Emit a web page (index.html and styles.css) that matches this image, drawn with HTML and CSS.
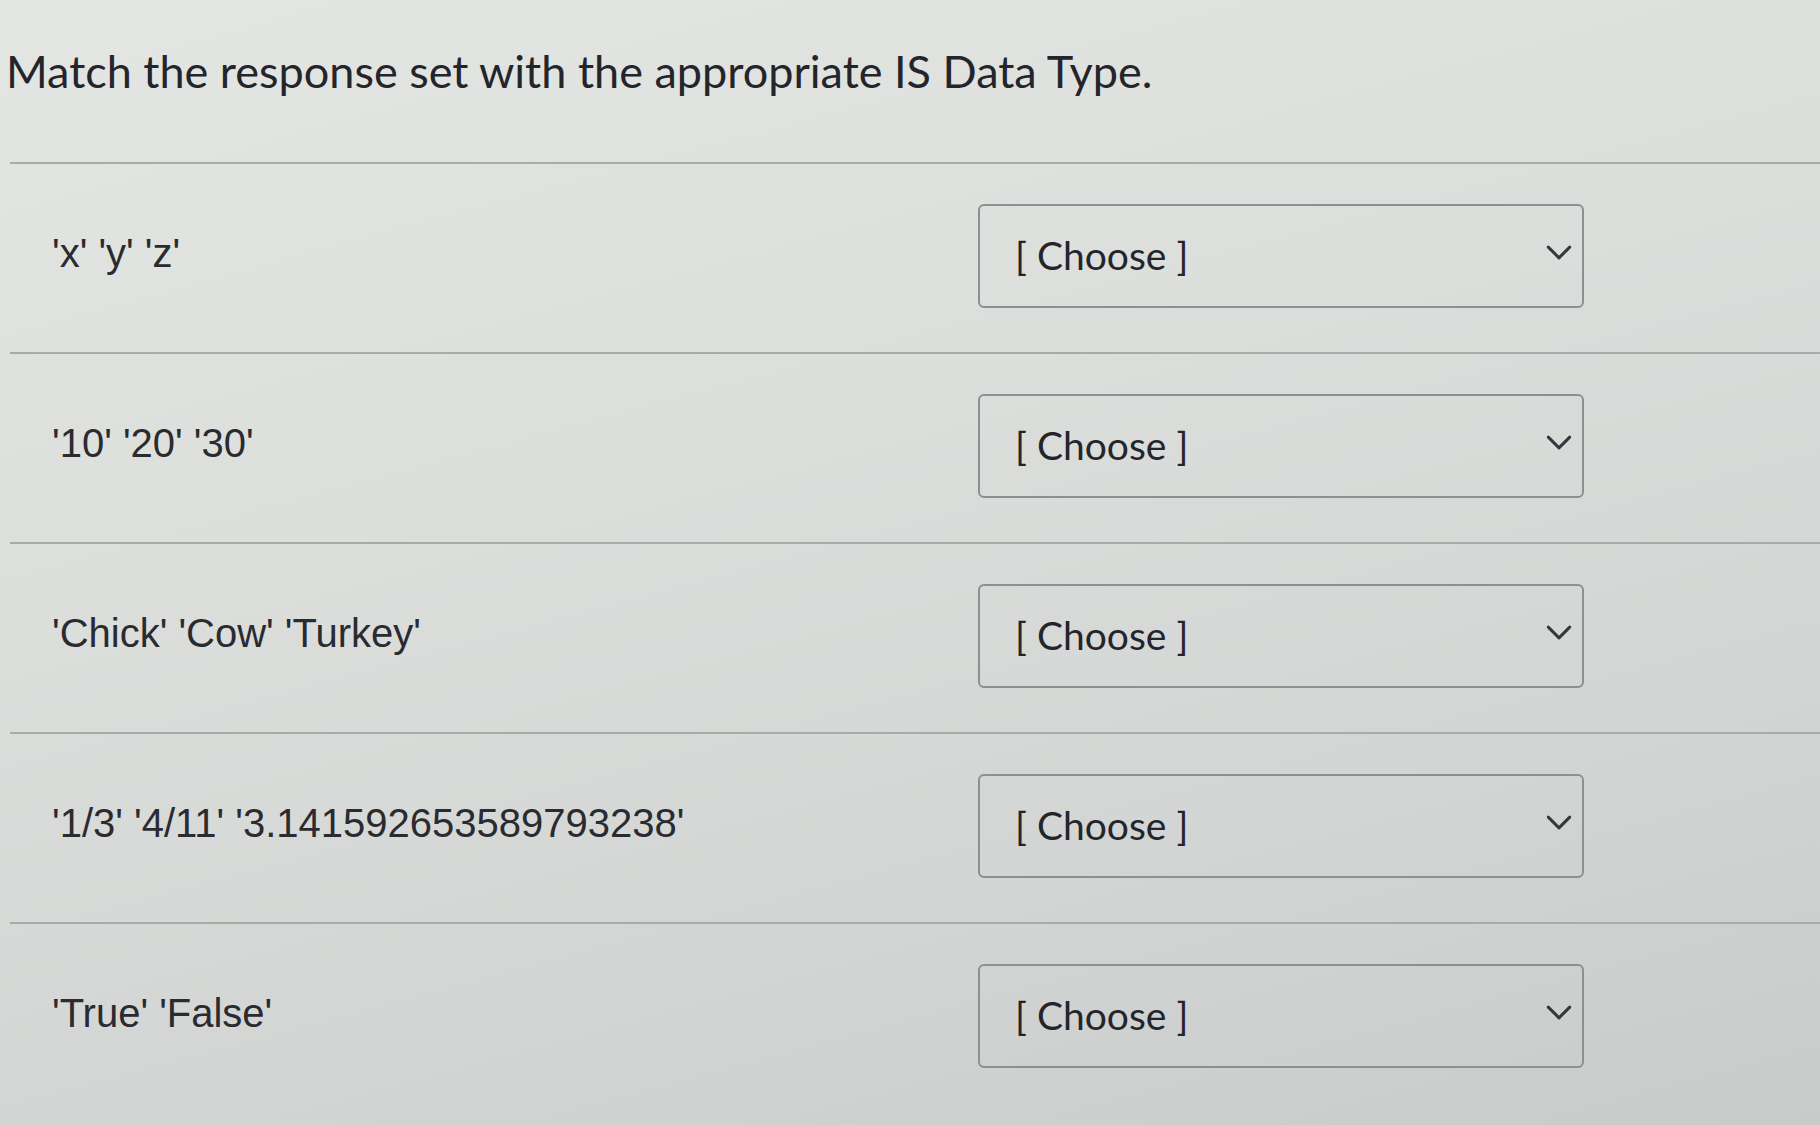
FILE: index.html
```html
<!DOCTYPE html>
<html lang="en">
<head>
<meta charset="utf-8">
<title>Matching Question</title>
<link rel="stylesheet" href="styles.css">
</head>
<body>
<div class="page">
  <h1 class="question-title">Match the response set with the appropriate IS Data Type.</h1>
  <div class="answers">
    <div class="answer-row">
      <div class="answer-label">'x' 'y' 'z'</div>
      <div class="answer-select"><span class="select-text">[ Choose ]</span><svg class="chevron" viewBox="0 0 24 14"><path d="M2 2 L12 12 L22 2" /></svg></div>
    </div>
    <div class="answer-row">
      <div class="answer-label">'10' '20' '30'</div>
      <div class="answer-select"><span class="select-text">[ Choose ]</span><svg class="chevron" viewBox="0 0 24 14"><path d="M2 2 L12 12 L22 2" /></svg></div>
    </div>
    <div class="answer-row">
      <div class="answer-label">'Chick' 'Cow' 'Turkey'</div>
      <div class="answer-select"><span class="select-text">[ Choose ]</span><svg class="chevron" viewBox="0 0 24 14"><path d="M2 2 L12 12 L22 2" /></svg></div>
    </div>
    <div class="answer-row">
      <div class="answer-label">'1/3' '4/11' '3.141592653589793238'</div>
      <div class="answer-select"><span class="select-text">[ Choose ]</span><svg class="chevron" viewBox="0 0 24 14"><path d="M2 2 L12 12 L22 2" /></svg></div>
    </div>
    <div class="answer-row">
      <div class="answer-label">'True' 'False'</div>
      <div class="answer-select"><span class="select-text">[ Choose ]</span><svg class="chevron" viewBox="0 0 24 14"><path d="M2 2 L12 12 L22 2" /></svg></div>
    </div>
  </div>
</div>
</body>
</html>
```
FILE: styles.css
```css
html, body {
  margin: 0;
  padding: 0;
}
body {
  width: 1820px;
  height: 1125px;
  overflow: hidden;
  background: linear-gradient(165deg, #e4e6e3 0%, #dcdedc 40%, #d2d4d3 75%, #c9cbca 100%);
  color: #2b2d33;
}
.page {
  padding: 44px 0 0 6px;
}
.question-title {
  margin: 0 0 64px 0;
  font-family: Lato, "Open Sans", sans-serif;
  font-weight: 400;
  font-size: 45px;
  line-height: 1.2;
  color: #24252a;
}
.answers {
  margin-left: 4px;
}
.answer-row {
  display: flex;
  align-items: center;
  border-top: 2px solid #a9abab;
  padding: 40px 0 44px 0;
}
.answer-label {
  flex: 0 0 930px;
  box-sizing: border-box;
  padding-left: 42px;
  padding-bottom: 6px;
  font-family: "Liberation Sans", Arial, sans-serif;
  font-size: 40px;
  color: #2a2b30;
}
.answer-select {
  box-sizing: border-box;
  width: 606px;
  height: 104px;
  margin-left: 38px;
  border: 2px solid #8d8f91;
  border-radius: 6px;
  display: flex;
  align-items: center;
  justify-content: space-between;
  padding: 0 10px 2px 35px;
}
.select-text {
  font-family: Lato, "Open Sans", sans-serif;
  font-size: 39px;
  color: #24252a;
}
.chevron {
  width: 26px;
  height: 15px;
  margin-bottom: 6px;
  fill: none;
  stroke: #36373c;
  stroke-width: 2.8;
  stroke-linecap: round;
  stroke-linejoin: round;
}
```
